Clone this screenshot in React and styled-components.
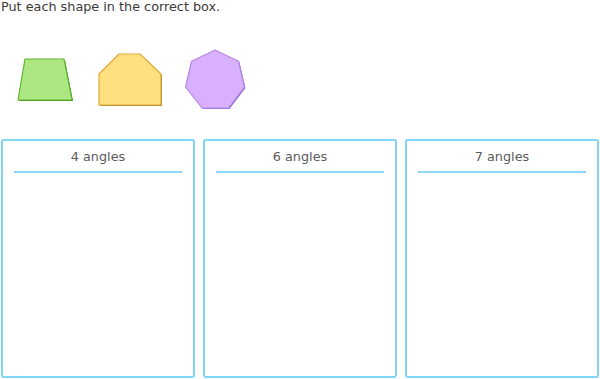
import React from "react";
import styled, { createGlobalStyle } from "styled-components";

const Global = createGlobalStyle`
  html, body { margin: 0; padding: 0; background: #fff; }
  body { font-family: "DejaVu Sans", Verdana, sans-serif; }
`;

const Page = styled.div`
  width: 600px;
  height: 379px;
  box-sizing: border-box;
  padding: 0 2px 0 1px;
  display: flex;
  flex-direction: column;
  overflow: hidden;
`;

const Prompt = styled.div`
  font-size: 12.8px;
  line-height: 14px;
  color: #3a3a3a;
  margin: 0;
`;

const ShapeRow = styled.div`
  display: flex;
  align-items: flex-start;
  height: 125px;
`;

const ShapeSvg = styled.svg`
  display: block;
  overflow: visible;
`;

const Bins = styled.div`
  display: grid;
  grid-template-columns: repeat(3, 194px);
  column-gap: 8px;
  height: 239px;
`;

const Bin = styled.div`
  box-sizing: border-box;
  border: 2px solid #80d4f5;
  border-radius: 3px;
  padding: 0 11px;
  display: flex;
  flex-direction: column;
`;

const BinTitle = styled.div`
  font-size: 12.8px;
  color: #5b5b5b;
  text-align: center;
  height: 30px;
  line-height: 31px;
  border-bottom: 2px solid #8fd9f6;
`;

const shapes = [
  {
    points: "24,59 63,59 71,100 17,100",
    fill: "#ace782",
    stroke: "#5fb532",
    shadow: "#3f8c1c",
  },
  {
    points: "118,54 139,54 160,74 160,105 98,105 98,74",
    fill: "#ffdf7e",
    stroke: "#dfab3c",
    shadow: "#a4782a",
  },
  {
    points: "214,50 237.5,61.3 243.5,87 227.5,108 201,108 184.5,87 190.5,61.3",
    fill: "#d8b0fd",
    stroke: "#b38ae8",
    shadow: "#9466d4",
  },
];

function Shape({ points, fill, stroke, shadow }) {
  return (
    <g>
      <polygon points={points} fill={shadow} transform="translate(1,1)" />
      <polygon points={points} fill={fill} stroke={stroke} strokeWidth="1.2" strokeLinejoin="round" />
    </g>
  );
}

export default function App() {
  return (
    <>
      <Global />
      <Page>
        <Prompt>Put each shape in the correct box.</Prompt>
        <ShapeRow>
          <ShapeSvg width="260" height="125" viewBox="0 14 260 125">
            {shapes.map((s, i) => (
              <Shape key={i} {...s} />
            ))}
          </ShapeSvg>
        </ShapeRow>
        <Bins>
          {["4 angles", "6 angles", "7 angles"].map((t) => (
            <Bin key={t}>
              <BinTitle>{t}</BinTitle>
            </Bin>
          ))}
        </Bins>
      </Page>
    </>
  );
}
